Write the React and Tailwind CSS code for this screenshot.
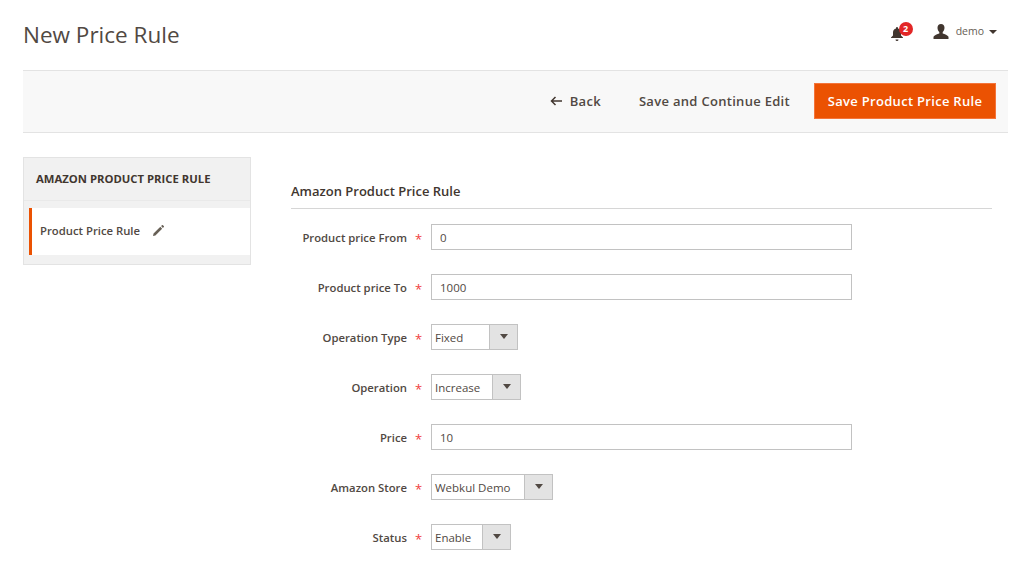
const rows = [
  { label: "Product price From", value: "0" },
  { label: "Product price To", value: "1000" },
  { label: "Operation Type", value: "Fixed", select: "w-[87px]" },
  { label: "Operation", value: "Increase", select: "w-[90px]" },
  { label: "Price", value: "10" },
  { label: "Amazon Store", value: "Webkul Demo", select: "w-[122px]" },
  { label: "Status", value: "Enable", select: "w-[80px]" },
];

function Select({ value, width }) {
  return (
    <div className={`${width} h-[26px] flex border border-[#c2c2c2] bg-white text-[11.5px] text-[#514943]`}>
      <div className="flex-1 pl-[3px] leading-[26px]">{value}</div>
      <div className="w-[28px] bg-[#e3e3e3] border-l border-[#c2c2c2] flex items-center justify-center">
        <div className="w-0 h-0 border-x-[4px] border-x-transparent border-t-[5px] border-t-[#514943]" />
      </div>
    </div>
  );
}

function Row({ label, value, select }) {
  return (
    <div className="flex items-center h-[26px] mb-6">
      <label className="w-[116px] pt-[3px] text-right text-[11.3px] font-semibold text-[#514943]">{label}</label>
      <span className="w-[24px] pr-[1px] text-center text-[13px] text-[#f04040] pt-[7px]">*</span>
      {select ? (
        <Select value={value} width={select} />
      ) : (
        <input
          readOnly
          defaultValue={value}
          className="w-[421px] h-[26px] border border-[#c2c2c2] bg-white px-2 pt-[2px] text-[11.5px] text-[#514943] outline-none"
        />
      )}
    </div>
  );
}

export default function App() {
  return (
    <div className="w-[1024px] h-[573px] overflow-hidden bg-white pl-[23px] pr-[16px] font-['Open_Sans',sans-serif]">
      <header className="h-[70px] flex items-center justify-between">
        <h1 className="text-[22.5px] text-[#514943] font-normal">New Price Rule</h1>
        <div className="flex items-center pr-[11px] pb-[7px]">
          <div className="relative mr-[29px] mt-[3px]">
            <svg width="14" height="15" viewBox="0 0 14 15" fill="#41362f">
              <path d="M7 1a1 1 0 0 1 1 1v.4c2 .5 3 2 3 4v3l2 2v.6H1v-.6l2-2v-3c0-2 1-3.500 3-4V2a1 1 0 0 1 1-1zM5.500 13.500h3a1.500 1.500 0 0 1-3 0z" />
            </svg>
            <span className="absolute -top-[4px] left-[9px] w-[14px] h-[14px] rounded-full bg-[#e22626] text-white text-[9px] font-bold flex items-center justify-center">
              2
            </span>
          </div>
          <svg width="16" height="16" viewBox="0 0 16 16" fill="#41362f" className="mr-[7px]">
            <path d="M8 0c2.200 0 3.500 1.600 3.500 3.800 0 1.800-.8 3.400-1.800 4.300v1.400c2 .7 5 1.700 5.800 3.200V15H.5v-2.300c.8-1.500 3.800-2.500 5.800-3.200V8.100C5.300 7.200 4.500 5.600 4.500 3.800 4.500 1.600 5.800 0 8 0z" />
          </svg>
          <span className="text-[10.5px] text-[#676056]">demo</span>
          <div className="ml-[5px] w-0 h-0 border-x-[4px] border-x-transparent border-t-[4px] border-t-[#41362f]" />
        </div>
      </header>

      <div className="h-[63px] pb-[2px] bg-[#f8f8f8] border-y border-[#e3e3e3] flex items-center justify-end pr-[12px] text-[13px] font-semibold tracking-[0.3px] text-[#514943]">
        <svg width="12" height="10" viewBox="0 0 12 10" fill="none" stroke="#41362f" strokeWidth="1.500" className="mr-[8px]">
          <path d="M12 5H1.500M5.500 1L1.500 5l4 4" />
        </svg>
        <span className="mr-[38px] pt-[2px]">Back</span>
        <span className="mr-[24px] pt-[2px]">Save and Continue Edit</span>
        <button className="w-[182px] h-[36px] pt-[2px] bg-[#eb5202] border border-[#f4743a] text-white font-semibold">
          Save Product Price Rule
        </button>
      </div>

      <div className="flex mt-[24px]">
        <aside className="w-[228px] h-[108px] bg-[#f1f1f1] border border-[#e3e3e3]">
          <div className="h-[43px] flex items-center pl-[12px] text-[11.3px] font-bold text-[#41362f] border-b border-[#e9e9e9]">
            AMAZON PRODUCT PRICE RULE
          </div>
          <div className="mt-[7px] ml-[5px] h-[47px] pb-[1px] bg-white border-l-[3px] border-[#eb5202] flex items-center pl-[8px] text-[11.3px] font-semibold text-[#514943]">
            Product Price Rule
            <svg width="11" height="11" viewBox="0 0 12 12" fill="#676056" className="ml-[13px] mb-[2px]">
              <path d="M0 12l.6-2.600L8 2l2 2-7.400 7.400zM8.800 1.200 9.800.2a.7.7 0 0 1 1 0l1 1a.7.7 0 0 1 0 1l-1 1z" />
            </svg>
          </div>
        </aside>

        <main className="ml-[40px] w-[701px]">
          <h2 className="mt-[25px] text-[13px] font-semibold text-[#41362f] pb-[6px] border-b border-[#d6d6d6]">
            Amazon Product Price Rule
          </h2>
          <div className="mt-[15px]">
            {rows.map((r) => (
              <Row key={r.label} {...r} />
            ))}
          </div>
        </main>
      </div>
    </div>
  );
}
